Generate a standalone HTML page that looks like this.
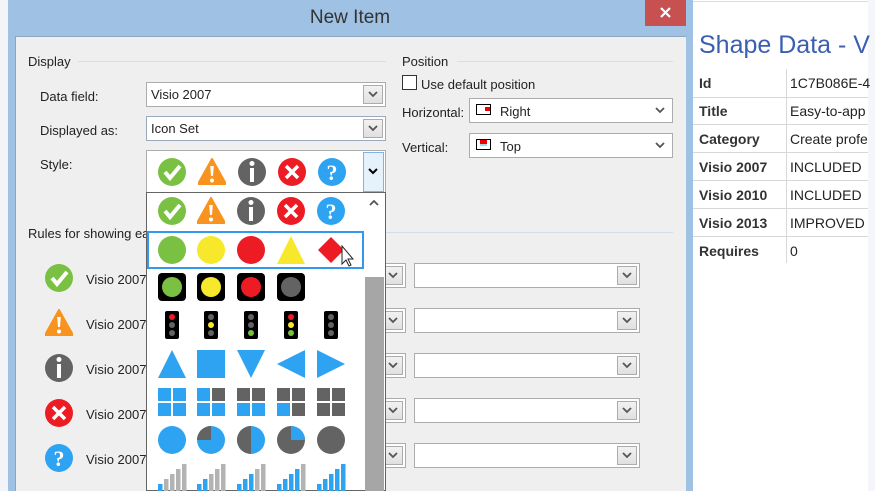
<!DOCTYPE html>
<html><head><meta charset="utf-8"><style>
*{margin:0;padding:0;box-sizing:border-box}
body{width:875px;height:491px;overflow:hidden;position:relative;background:#f3f4f8;font-family:"Liberation Sans",sans-serif;font-size:13px;color:#222}
.a{position:absolute}
.combo{position:absolute;background:#fff;border:1px solid #acacac}
.btn{position:absolute;right:2px;top:2px;bottom:2px;width:20px;background:linear-gradient(#f2f2f2,#e0e0e0);border:1px solid #acacac}
.btn svg,.arr svg{position:absolute;left:50%;top:50%;margin:-4px 0 0 -6px}
.lbl{position:absolute;white-space:nowrap}
.line{position:absolute;height:1px;background:#d5dfe5}
.td{position:absolute;font-size:14px;white-space:nowrap}
.b{font-weight:bold;color:#333}
.hl{position:absolute;height:1px;background:#d8d8d8;left:693px;width:175px}
</style></head><body>
<!-- dialog frame -->
<div class="a" style="left:8px;top:0;width:685px;height:491px;background:#9fc1e3"></div>
<div class="a" style="left:15px;top:36px;width:671px;height:455px;background:#efefef;border-left:1px solid #8aa;border-top:1px solid #8ab"></div>
<div class="lbl" style="left:0;width:700px;top:7px;text-align:center;font-size:19px;color:#333">New Item</div>
<div class="a" style="left:645px;top:0;width:41px;height:26px;background:#c75050"></div>
<svg class="a" style="left:659px;top:7px" width="13" height="12"><path d="M2 1L11 10M11 1L2 10" stroke="#fff" stroke-width="2.2"/></svg>
<!-- right panel -->
<div class="a" style="left:693px;top:0;width:175px;height:491px;background:#fff"></div>
<div class="a" style="left:868px;top:0;width:7px;height:491px;background:#f5f6fa"></div>
<div class="a" style="left:693px;top:1px;width:175px;height:1px;background:#ddd"></div>
<div class="lbl" style="left:699px;top:31px;font-size:25px;color:#3b5fb0">Shape Data - V</div>
<div class="a" style="left:786px;top:69px;width:1px;height:194px;background:#d8d8d8"></div>
<div class="hl" style="top:97px"></div><div class="hl" style="top:124px"></div><div class="hl" style="top:152px"></div><div class="hl" style="top:180px"></div><div class="hl" style="top:208px"></div><div class="hl" style="top:236px"></div>
<div class="td b" style="left:699px;top:75px">Id</div><div class="td" style="left:790px;top:75px">1C7B086E-4</div>
<div class="td b" style="left:699px;top:103px">Title</div><div class="td" style="left:790px;top:103px">Easy-to-app</div>
<div class="td b" style="left:699px;top:131px">Category</div><div class="td" style="left:790px;top:131px">Create profe</div>
<div class="td b" style="left:699px;top:159px">Visio 2007</div><div class="td" style="left:790px;top:159px">INCLUDED</div>
<div class="td b" style="left:699px;top:187px">Visio 2010</div><div class="td" style="left:790px;top:187px">INCLUDED</div>
<div class="td b" style="left:699px;top:215px">Visio 2013</div><div class="td" style="left:790px;top:215px">IMPROVED</div>
<div class="td b" style="left:699px;top:243px">Requires</div><div class="td" style="left:790px;top:243px">0</div>

<!-- Display section -->
<div class="lbl" style="left:28px;top:54px">Display</div>
<div class="line" style="left:78px;top:61px;width:308px"></div>
<div class="lbl" style="left:402px;top:54px">Position</div>
<div class="line" style="left:457px;top:61px;width:216px"></div>
<div class="lbl" style="left:40px;top:89px">Data field:</div>
<div class="combo" style="left:146px;top:82px;width:240px;height:25px"><span class="lbl" style="left:4px;top:4px">Visio 2007</span><div class="btn"><svg width="12" height="8"><path d="M2 1L6 5L10 1" stroke="#555" stroke-width="1.8" fill="none"/></svg></div></div>
<div class="lbl" style="left:40px;top:123px">Displayed as:</div>
<div class="combo" style="left:146px;top:116px;width:240px;height:25px;border-color:#9aa8c0"><span class="lbl" style="left:4px;top:4px">Icon Set</span><div class="btn"><svg width="12" height="8"><path d="M2 1L6 5L10 1" stroke="#555" stroke-width="1.8" fill="none"/></svg></div></div>
<div class="lbl" style="left:40px;top:157px">Style:</div>
<div class="combo" style="left:146px;top:150px;width:240px;height:43px"></div>
<div class="a" style="left:363px;top:152px;width:21px;height:40px;background:#e5f1fb;border:1px solid #7eb4ea"></div>
<svg class="a" style="left:367px;top:168px" width="12" height="8"><path d="M2 1L6 5L10 1" stroke="#000" stroke-width="2" fill="none"/></svg>

<div class="a" style="left:402px;top:75px;width:15px;height:15px;background:#fff;border:1px solid #333"></div>
<div class="lbl" style="left:421px;top:77px">Use default position</div>
<div class="lbl" style="left:402px;top:105px">Horizontal:</div>
<div class="combo" style="left:469px;top:98px;width:204px;height:25px"><svg class="a" style="left:6px;top:5px" width="16" height="12"><rect x="0.5" y="0.5" width="14" height="10" fill="#fff" stroke="#000"/><rect x="9" y="3" width="5" height="4" fill="#e00"/></svg><span class="lbl" style="left:30px;top:5px">Right</span><svg class="a" style="left:184px;top:8px" width="12" height="8"><path d="M2 1L6 5L10 1" stroke="#555" stroke-width="1.8" fill="none"/></svg></div>
<div class="lbl" style="left:402px;top:140px">Vertical:</div>
<div class="combo" style="left:469px;top:133px;width:204px;height:25px"><svg class="a" style="left:6px;top:5px" width="16" height="12"><rect x="0.5" y="0.5" width="14" height="10" fill="#fff" stroke="#000"/><rect x="4" y="1" width="7" height="4" fill="#e00"/><rect x="4" y="5" width="7" height="2" fill="#9de"/></svg><span class="lbl" style="left:30px;top:5px">Top</span><svg class="a" style="left:184px;top:8px" width="12" height="8"><path d="M2 1L6 5L10 1" stroke="#555" stroke-width="1.8" fill="none"/></svg></div>

<div class="lbl" style="left:28px;top:226px">Rules for showing ea</div>
<div class="line" style="left:385px;top:232px;width:288px"></div>

<svg width="0" height="0" style="position:absolute">
<defs>
<symbol id="ck" viewBox="-14 -14 28 28"><circle r="14" fill="#7ac143"/><path d="M-7 0L-2 6L8 -6" stroke="#fff" stroke-width="4" fill="none"/></symbol>
<symbol id="wn" viewBox="-14 -14 28 28"><path d="M0 -13L14 12H-14Z" fill="#f7931e" stroke="#f7931e" stroke-width="2" stroke-linejoin="round"/><path d="M-1.8 -6H1.8L1 4H-1Z" fill="#fff"/><circle cy="8.5" r="2" fill="#fff"/></symbol>
<symbol id="in" viewBox="-14 -14 28 28"><circle r="14" fill="#636363"/><rect x="-2" y="-4" width="4" height="14" fill="#fff"/><circle cy="-8.5" r="2.5" fill="#fff"/></symbol>
<symbol id="xx" viewBox="-14 -14 28 28"><circle r="14" fill="#ed1c24"/><path d="M-6 -6L6 6M6 -6L-6 6" stroke="#fff" stroke-width="3.5"/></symbol>
<symbol id="qq" viewBox="-14 -14 28 28"><circle r="14" fill="#2ea3f2"/><text x="0" y="8" text-anchor="middle" font-family="Liberation Serif,serif" font-weight="bold" font-size="22" fill="#fff">?</text></symbol>
</defs></svg>

<!-- rule rows -->
<svg class="a" style="left:45px;top:264px" width="28" height="28"><use href="#ck"/></svg>
<svg class="a" style="left:45px;top:309px" width="28" height="28"><use href="#wn"/></svg>
<svg class="a" style="left:45px;top:354px" width="28" height="28"><use href="#in"/></svg>
<svg class="a" style="left:45px;top:399px" width="28" height="28"><use href="#xx"/></svg>
<svg class="a" style="left:45px;top:444px" width="28" height="28"><use href="#qq"/></svg>
<div class="lbl" style="left:86px;top:272px">Visio 2007</div>
<div class="lbl" style="left:86px;top:317px">Visio 2007</div>
<div class="lbl" style="left:86px;top:362px">Visio 2007</div>
<div class="lbl" style="left:86px;top:407px">Visio 2007</div>
<div class="lbl" style="left:86px;top:452px">Visio 2007</div>

<div class="combo" style="left:360px;top:263px;width:46px;height:25px"><div class="btn"><svg width="12" height="8"><path d="M2 1L6 5L10 1" stroke="#555" stroke-width="1.8" fill="none"/></svg></div></div>
<div class="combo" style="left:360px;top:308px;width:46px;height:25px"><div class="btn"><svg width="12" height="8"><path d="M2 1L6 5L10 1" stroke="#555" stroke-width="1.8" fill="none"/></svg></div></div>
<div class="combo" style="left:360px;top:353px;width:46px;height:25px"><div class="btn"><svg width="12" height="8"><path d="M2 1L6 5L10 1" stroke="#555" stroke-width="1.8" fill="none"/></svg></div></div>
<div class="combo" style="left:360px;top:398px;width:46px;height:25px"><div class="btn"><svg width="12" height="8"><path d="M2 1L6 5L10 1" stroke="#555" stroke-width="1.8" fill="none"/></svg></div></div>
<div class="combo" style="left:360px;top:443px;width:46px;height:25px"><div class="btn"><svg width="12" height="8"><path d="M2 1L6 5L10 1" stroke="#555" stroke-width="1.8" fill="none"/></svg></div></div>
<div class="combo" style="left:414px;top:263px;width:226px;height:25px"><div class="btn"><svg width="12" height="8"><path d="M2 1L6 5L10 1" stroke="#555" stroke-width="1.8" fill="none"/></svg></div></div>
<div class="combo" style="left:414px;top:308px;width:226px;height:25px"><div class="btn"><svg width="12" height="8"><path d="M2 1L6 5L10 1" stroke="#555" stroke-width="1.8" fill="none"/></svg></div></div>
<div class="combo" style="left:414px;top:353px;width:226px;height:25px"><div class="btn"><svg width="12" height="8"><path d="M2 1L6 5L10 1" stroke="#555" stroke-width="1.8" fill="none"/></svg></div></div>
<div class="combo" style="left:414px;top:398px;width:226px;height:25px"><div class="btn"><svg width="12" height="8"><path d="M2 1L6 5L10 1" stroke="#555" stroke-width="1.8" fill="none"/></svg></div></div>
<div class="combo" style="left:414px;top:443px;width:226px;height:25px"><div class="btn"><svg width="12" height="8"><path d="M2 1L6 5L10 1" stroke="#555" stroke-width="1.8" fill="none"/></svg></div></div>

<!-- style combo icons -->
<svg class="a" style="left:158px;top:158px" width="28" height="28"><use href="#ck"/></svg>
<svg class="a" style="left:198px;top:158px" width="28" height="28"><use href="#wn"/></svg>
<svg class="a" style="left:238px;top:158px" width="28" height="28"><use href="#in"/></svg>
<svg class="a" style="left:278px;top:158px" width="28" height="28"><use href="#xx"/></svg>
<svg class="a" style="left:318px;top:158px" width="28" height="28"><use href="#qq"/></svg>

<!-- dropdown list -->
<div class="a" style="left:146px;top:192px;width:240px;height:299px;background:#fff;border:1px solid #646464"></div>
<div class="a" style="left:365px;top:277px;width:19px;height:214px;background:#a6a6a6"></div>
<svg class="a" style="left:368px;top:199px" width="12" height="8"><path d="M2 6L6 2L10 6" stroke="#555" stroke-width="1.8" fill="none"/></svg>
<svg class="a" style="left:146px;top:192px" width="219" height="299">
<g transform="translate(0,19)">
<use href="#ck" x="12" y="-14" width="28" height="28"/><use href="#wn" x="51" y="-14" width="28" height="28"/><use href="#in" x="91" y="-14" width="28" height="28"/><use href="#xx" x="131" y="-14" width="28" height="28"/><use href="#qq" x="171" y="-14" width="28" height="28"/>
</g>
<rect x="2" y="40" width="215" height="36" fill="none" stroke="#3399ee" stroke-width="2"/>
<g transform="translate(0,58)">
<circle cx="26" r="14" fill="#7ac143"/><circle cx="65" r="14" fill="#f7e82c"/><circle cx="105" r="14" fill="#ed1c24"/>
<path d="M145 -14L159 14H131Z" fill="#f7e82c"/><path d="M185 -13L198 0L185 13L172 0Z" fill="#ed1c24"/>
<path d="M196 -4V14L200 10L203 16L205 15L202 9H207Z" fill="#fff" stroke="#222"/>
</g>
<g transform="translate(0,95)">
<rect x="12" y="-14" width="28" height="28" rx="4"/><circle cx="26" r="10" fill="#7ac143"/>
<rect x="51" y="-14" width="28" height="28" rx="4"/><circle cx="65" r="10" fill="#f7e82c"/>
<rect x="91" y="-14" width="28" height="28" rx="4"/><circle cx="105" r="10" fill="#ed1c24"/>
<rect x="131" y="-14" width="28" height="28" rx="4"/><circle cx="145" r="10" fill="#636363"/>
</g>
<g transform="translate(0,133)">
<rect x="19" y="-14" width="14" height="28" rx="2"/><circle cx="26" cy="-8" r="3" fill="#ed1c24"/><circle cx="26" r="3" fill="#636363"/><circle cx="26" cy="8" r="3" fill="#636363"/>
<rect x="58" y="-14" width="14" height="28" rx="2"/><circle cx="65" cy="-8" r="3" fill="#636363"/><circle cx="65" r="3" fill="#f7e82c"/><circle cx="65" cy="8" r="3" fill="#636363"/>
<rect x="98" y="-14" width="14" height="28" rx="2"/><circle cx="105" cy="-8" r="3" fill="#636363"/><circle cx="105" r="3" fill="#636363"/><circle cx="105" cy="8" r="3" fill="#7ac143"/>
<rect x="138" y="-14" width="14" height="28" rx="2"/><circle cx="145" cy="-8" r="3" fill="#ed1c24"/><circle cx="145" r="3" fill="#f7e82c"/><circle cx="145" cy="8" r="3" fill="#7ac143"/>
<rect x="178" y="-14" width="14" height="28" rx="2"/><circle cx="185" cy="-8" r="3" fill="#636363"/><circle cx="185" r="3" fill="#636363"/><circle cx="185" cy="8" r="3" fill="#636363"/>
</g>
<g transform="translate(0,172)" fill="#2ea3f2">
<path d="M26 -14L40 14H12Z"/><rect x="51" y="-14" width="28" height="28"/><path d="M91 -14H119L105 14Z"/><path d="M131 0L159 -14V14Z"/><path d="M171 -14L199 0L171 14Z"/>
</g>
<g transform="translate(0,210)">
<g fill="#2ea3f2"><rect x="12" y="-14" width="13" height="13"/><rect x="27" y="-14" width="13" height="13"/><rect x="12" y="1" width="13" height="13"/><rect x="27" y="1" width="13" height="13"/></g>
<rect x="51" y="-14" width="13" height="13" fill="#2ea3f2"/><rect x="66" y="-14" width="13" height="13" fill="#636363"/><rect x="51" y="1" width="13" height="13" fill="#2ea3f2"/><rect x="66" y="1" width="13" height="13" fill="#2ea3f2"/>
<rect x="91" y="-14" width="13" height="13" fill="#636363"/><rect x="106" y="-14" width="13" height="13" fill="#636363"/><rect x="91" y="1" width="13" height="13" fill="#2ea3f2"/><rect x="106" y="1" width="13" height="13" fill="#2ea3f2"/>
<rect x="131" y="-14" width="13" height="13" fill="#636363"/><rect x="146" y="-14" width="13" height="13" fill="#636363"/><rect x="131" y="1" width="13" height="13" fill="#2ea3f2"/><rect x="146" y="1" width="13" height="13" fill="#636363"/>
<g fill="#636363"><rect x="171" y="-14" width="13" height="13"/><rect x="186" y="-14" width="13" height="13"/><rect x="171" y="1" width="13" height="13"/><rect x="186" y="1" width="13" height="13"/></g>
</g>
<g transform="translate(0,248)">
<circle cx="26" r="14" fill="#2ea3f2"/>
<circle cx="65" r="14" fill="#2ea3f2"/><path d="M65 0V-14A14 14 0 0 0 51 0Z" fill="#636363"/>
<circle cx="105" r="14" fill="#2ea3f2"/><path d="M105 -14A14 14 0 0 0 105 14Z" fill="#636363"/>
<circle cx="145" r="14" fill="#636363"/><path d="M145 0V-14A14 14 0 0 1 159 0Z" fill="#2ea3f2"/>
<circle cx="185" r="14" fill="#636363"/>
</g>
<g transform="translate(0,299)">
<g transform="translate(12,0)"><rect x="0" y="-7" width="4.5" height="7" fill="#2ea3f2"/><rect x="6" y="-12" width="4.5" height="12" fill="#b3b3b3"/><rect x="12" y="-17" width="4.5" height="17" fill="#b3b3b3"/><rect x="18" y="-22" width="4.5" height="22" fill="#b3b3b3"/><rect x="24" y="-27" width="4.5" height="27" fill="#b3b3b3"/></g>
<g transform="translate(51,0)"><rect x="0" y="-7" width="4.5" height="7" fill="#2ea3f2"/><rect x="6" y="-12" width="4.5" height="12" fill="#2ea3f2"/><rect x="12" y="-17" width="4.5" height="17" fill="#b3b3b3"/><rect x="18" y="-22" width="4.5" height="22" fill="#b3b3b3"/><rect x="24" y="-27" width="4.5" height="27" fill="#b3b3b3"/></g>
<g transform="translate(91,0)"><rect x="0" y="-7" width="4.5" height="7" fill="#2ea3f2"/><rect x="6" y="-12" width="4.5" height="12" fill="#2ea3f2"/><rect x="12" y="-17" width="4.5" height="17" fill="#2ea3f2"/><rect x="18" y="-22" width="4.5" height="22" fill="#b3b3b3"/><rect x="24" y="-27" width="4.5" height="27" fill="#b3b3b3"/></g>
<g transform="translate(131,0)"><rect x="0" y="-7" width="4.5" height="7" fill="#2ea3f2"/><rect x="6" y="-12" width="4.5" height="12" fill="#2ea3f2"/><rect x="12" y="-17" width="4.5" height="17" fill="#2ea3f2"/><rect x="18" y="-22" width="4.5" height="22" fill="#2ea3f2"/><rect x="24" y="-27" width="4.5" height="27" fill="#b3b3b3"/></g>
<g transform="translate(171,0)" fill="#2ea3f2"><rect x="0" y="-7" width="4.5" height="7"/><rect x="6" y="-12" width="4.5" height="12"/><rect x="12" y="-17" width="4.5" height="17"/><rect x="18" y="-22" width="4.5" height="22"/><rect x="24" y="-27" width="4.5" height="27"/></g>
</g>
</svg>
</body></html>
